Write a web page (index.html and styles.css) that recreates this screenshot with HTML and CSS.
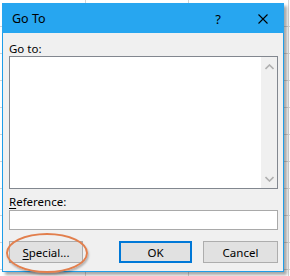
FILE: index.html
```html
<!DOCTYPE html>
<html lang="en">
<head>
    <meta charset="UTF-8">
    <title>Go To</title>
    <link rel="stylesheet" href="styles.css">
</head>
<body>
    <div class="dialog">
        <div class="titlebar">
            <span class="title">Go To</span>
            <span class="help">?</span>
            <svg class="close" width="10" height="10" viewBox="0 0 10 10">
                <path d="M0.5 0.5 L9.5 9.5 M9.5 0.5 L0.5 9.5" stroke="#000" stroke-width="1.1" fill="none"/>
            </svg>
        </div>
        <div class="content">
            <label class="label first">Go to:</label>
            <div class="listbox">
                <div class="scrollbar">
                    <svg width="9" height="6" viewBox="0 0 9 6"><path d="M0.5 5 L4.5 1 L8.5 5" stroke="#b0b0b0" stroke-width="1.6" fill="none"/></svg>
                    <svg width="9" height="6" viewBox="0 0 9 6"><path d="M0.5 1 L4.5 5 L8.5 1" stroke="#b0b0b0" stroke-width="1.6" fill="none"/></svg>
                </div>
            </div>
            <label class="label"><u>R</u>eference:</label>
            <div class="input"></div>
            <div class="buttons">
                <div class="special-wrap">
                    <button class="btn special"><u>S</u>pecial...</button>
                    <div class="circle"></div>
                </div>
                <button class="btn ok">OK</button>
                <button class="btn cancel">Cancel</button>
            </div>
        </div>
    </div>
</body>
</html>
```
FILE: styles.css
```css
body {
    margin: 0;
    width: 290px;
    height: 276px;
    overflow: hidden;
    background-color: #fff;
    background-image:
        linear-gradient(to right, transparent 85px, #d4d4d4 85px, #d4d4d4 86px, transparent 86px),
        linear-gradient(to right, transparent 188px, #d4d4d4 188px, #d4d4d4 189px, transparent 189px),
        linear-gradient(to right, transparent 288px, #d4d4d4 288px, #d4d4d4 289px, transparent 289px),
        repeating-linear-gradient(to bottom, transparent 0, transparent 26px, #d4d4d4 26px, #d4d4d4 27px);
    font-family: 'Noto Sans', sans-serif;
    font-size: 11.5px;
    color: #000;
    padding: 3px 0 0 2px;
    box-sizing: border-box;
}

.dialog {
    width: 282px;
    height: 269px;
    box-sizing: border-box;
    border: 1px solid #1e9de8;
    border-top: none;
    background: #f0f0f0;
    box-shadow: 3px 3px 3px rgba(0, 0, 0, 0.35);
    display: flex;
    flex-direction: column;
}

.titlebar {
    height: 30px;
    margin: 0 -1px;
    background: #27a6f0;
    display: flex;
    align-items: center;
    padding: 0 16px 0 10px;
}

.title {
    font-size: 12.5px;
    flex: 1;
    padding-top: 1px;
}

.help {
    font-size: 13px;
    margin-right: 37px;
    padding-top: 1px;
}

.close {
    margin-top: 2px;
}

.content {
    flex: 1;
    padding: 0 5px 0 6px;
    display: flex;
    flex-direction: column;
}

.label {
    display: block;
    height: 15px;
    line-height: 15px;
    margin-top: 5px;
}

.label.first {
    margin-top: 8px;
}

.label u {
    text-underline-offset: 2px;
}

.listbox {
    height: 133px;
    box-sizing: border-box;
    border: 1px solid #82878f;
    background: #fff;
    display: flex;
    justify-content: flex-end;
    margin-top: 0;
}

.scrollbar {
    width: 16px;
    background: #f0f0f0;
    display: flex;
    flex-direction: column;
    justify-content: space-between;
    align-items: center;
    padding: 7px 0 6px;
}

.input {
    height: 20px;
    box-sizing: border-box;
    border: 1px solid #a9a9a9;
    background: #fff;
    margin-top: 1px;
}

.buttons {
    display: flex;
    margin-top: 11px;
}

.btn {
    height: 22px;
    box-sizing: border-box;
    background: #e1e1e1;
    border: 1px solid #adadad;
    font-family: 'Noto Sans', sans-serif;
    font-size: 11.5px;
    color: #000;
    padding: 0;
}

.special-wrap {
    position: relative;
    width: 74px;
    margin-right: 36px;
}

.special {
    width: 74px;
}

.special u {
    text-underline-offset: 2px;
}

.circle {
    position: absolute;
    left: -3px;
    top: -8px;
    width: 78px;
    height: 36px;
    border: 2px solid #e27f4d;
    border-radius: 50%;
    box-shadow: 1px 2px 2px rgba(0, 0, 0, 0.25);
}

.ok {
    width: 73px;
    border: 2px solid #0078d7;
    margin-right: 11px;
}

.cancel {
    width: 75px;
}
```
